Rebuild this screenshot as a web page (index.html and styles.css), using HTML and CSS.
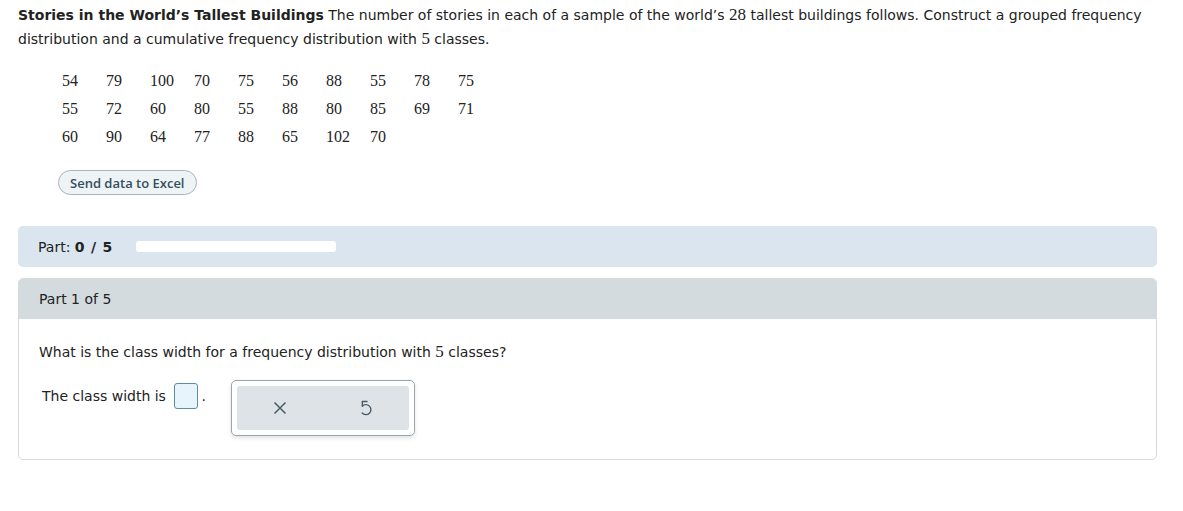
FILE: index.html
```html
<!DOCTYPE html>
<html>
<head>
<meta charset="utf-8">
<link rel="stylesheet" href="styles.css">
</head>
<body>
<div class="page">
  <p class="intro"><b>Stories in the World’s Tallest Buildings</b> The number of stories in each of a sample of the world’s <span class="num">28</span> tallest buildings follows. Construct a grouped frequency<br>distribution and a cumulative frequency distribution with <span class="num">5</span> classes.</p>
  <div class="data">
    <span>54</span><span>79</span><span>100</span><span>70</span><span>75</span><span>56</span><span>88</span><span>55</span><span>78</span><span>75</span>
    <span>55</span><span>72</span><span>60</span><span>80</span><span>55</span><span>88</span><span>80</span><span>85</span><span>69</span><span>71</span>
    <span>60</span><span>90</span><span>64</span><span>77</span><span>88</span><span>65</span><span>102</span><span>70</span>
  </div>
  <button class="excel">Send data to Excel</button>
  <div class="partbar">
    <span>Part: <b>0 / 5</b></span>
    <div class="progress"></div>
  </div>
  <div class="card">
    <div class="card-head">Part 1 of 5</div>
    <div class="card-body">
      <p class="question">What is the class width for a frequency distribution with <span class="num">5</span> classes?</p>
      <div class="answer-row">
        <span class="answer-text">The class width is <span class="box"></span>.</span>
        <div class="tools">
          <div class="tools-inner">
            <span class="tool">
              <svg width="14" height="14" viewBox="0 0 14 14"><path d="M1.5 1.5 L12.5 12.5 M12.5 1.5 L1.5 12.5" stroke="#4a5a66" stroke-width="1.5" fill="none"/></svg>
            </span>
            <span class="tool">
              <svg width="14" height="17" viewBox="0 0 14 17"><path d="M8 1.5 L3.3 1.5 L3.3 6.2 A5 5 0 1 1 3.2 13" stroke="#4a5a66" stroke-width="1.4" fill="none" stroke-linejoin="round" stroke-linecap="round"/></svg>
            </span>
          </div>
        </div>
      </div>
    </div>
  </div>
</div>
</body>
</html>
```
FILE: styles.css
```css
body {
  margin: 0;
  background: #fff;
  font-family: "DejaVu Sans", Verdana, sans-serif;
  color: #222;
}
.page {
  padding: 3px 26px 0 18px;
}
.intro {
  margin: 0;
  font-size: 14px;
  line-height: 24px;
}
.intro b {
  font-weight: bold;
}
.num {
  font-family: "Liberation Serif", "Times New Roman", serif;
  font-size: 17px;
  line-height: 1;
}
.data {
  display: grid;
  grid-template-columns: repeat(10, 44px);
  grid-auto-rows: 28px;
  margin: 16px 0 0 44px;
  font-family: "Liberation Serif", "Times New Roman", serif;
  font-size: 16px;
  color: #222;
  align-items: center;
}
.excel {
  display: block;
  margin: 19px 0 0 40px;
  height: 25px;
  padding: 0 11px;
  border: 1px solid #a9b4bb;
  border-radius: 13px;
  background: #eef3f5;
  color: #34505e;
  font-family: "Open Sans", sans-serif;
  font-weight: 600;
  font-size: 13px;
}
.partbar {
  margin-top: 31px;
  height: 41px;
  background: #dae5ef;
  border-radius: 5px;
  display: flex;
  align-items: center;
  padding-left: 20px;
  font-size: 14px;
}
.partbar b {
  font-weight: bold;
  letter-spacing: 0.8px;
}
.progress {
  margin-left: 23px;
  width: 200px;
  height: 11px;
  background: #fff;
  border-radius: 3px;
}
.card {
  margin-top: 11px;
  border: 1px solid #d6dadd;
  border-radius: 5px;
  overflow: hidden;
}
.card-head {
  height: 40px;
  background: #d3dbde;
  display: flex;
  align-items: center;
  padding-left: 20px;
  font-size: 14px;
}
.card-body {
  padding: 24px 20px 22px 20px;
  height: 140px;
  box-sizing: border-box;
}
.question {
  margin: 0;
  font-size: 14px;
  line-height: 18px;
}
.answer-row {
  display: flex;
  align-items: flex-start;
  margin-top: 19px;
}
.answer-text {
  font-size: 14px;
  margin: 3px 0 0 3px;
  display: flex;
  align-items: center;
  white-space: pre;
}
.box {
  display: inline-block;
  width: 22px;
  height: 24px;
  border: 1px solid #5a8fa0;
  border-radius: 3px;
  background: #e8f4fb;
  margin: 0 3px 0 4px;
}
.tools {
  margin-left: 25px;
  padding: 5px;
  border: 1px solid #9aa6ad;
  border-radius: 5px;
  background: #fff;
  box-shadow: 0 2px 4px rgba(0,0,0,0.12);
}
.tools-inner {
  width: 172px;
  height: 44px;
  background: #dde3e6;
  border-radius: 3px;
  display: flex;
  align-items: center;
  justify-content: space-around;
}
.tool {
  display: flex;
  width: 40px;
  justify-content: center;
}
```
